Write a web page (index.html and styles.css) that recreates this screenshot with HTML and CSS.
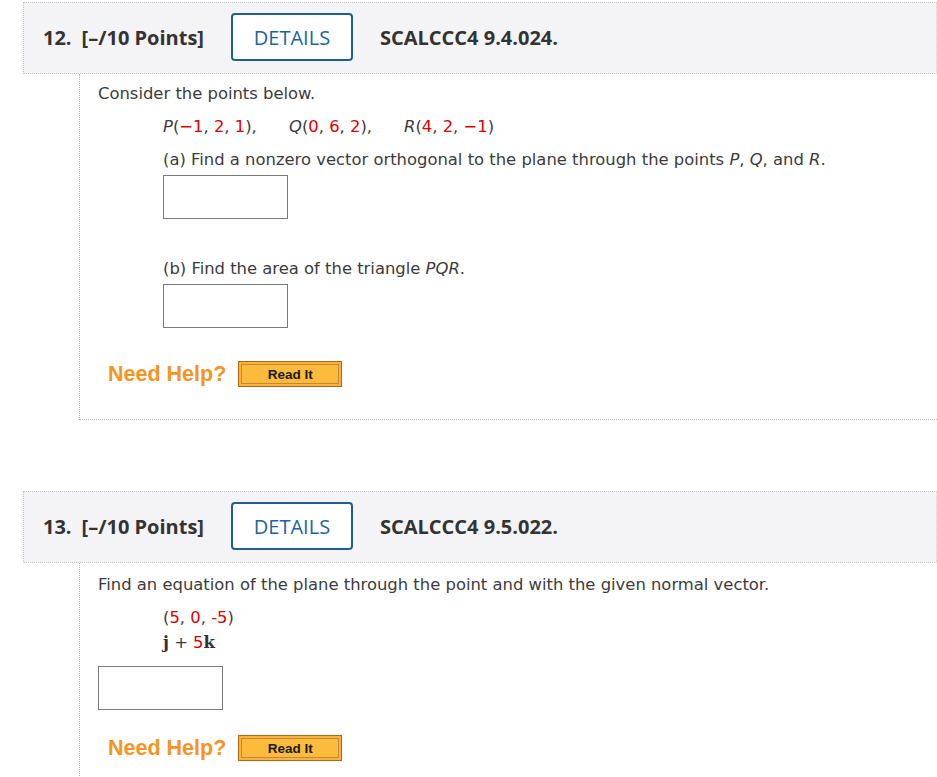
FILE: index.html
```html
<!DOCTYPE html>
<html>
<head>
<meta charset="utf-8">
<link rel="stylesheet" href="styles.css">
</head>
<body>
<div class="page">
  <section class="question">
    <div class="qhead">
      <span class="qnum">12.</span>
      <span class="qpts">[–/10 Points]</span>
      <span class="details">DETAILS</span>
      <span class="qcode">SCALCCC4 9.4.024.</span>
    </div>
    <div class="qbody">
      <p class="line intro">Consider the points below.</p>
      <p class="line indent pts">
        <span class="pt"><i>P</i>(<span class="red">−1</span>, <span class="red">2</span>, <span class="red">1</span>),</span>
        <span class="pt"><i>Q</i>(<span class="red">0</span>, <span class="red">6</span>, <span class="red">2</span>),</span>
        <span class="pt"><i>R</i>(<span class="red">4</span>, <span class="red">2</span>, <span class="red">−1</span>)</span>
      </p>
      <p class="line indent parta">(a) Find a nonzero vector orthogonal to the plane through the points <i>P</i>, <i>Q</i>, and <i>R</i>.</p>
      <div class="answer indent-box"></div>
      <p class="line indent partb">(b) Find the area of the triangle <i>PQR</i>.</p>
      <div class="answer indent-box"></div>
      <div class="help">
        <span class="needhelp">Need Help?</span>
        <span class="readit"><span class="readit-inner">Read It</span></span>
      </div>
    </div>
  </section>

  <section class="question second">
    <div class="qhead">
      <span class="qnum">13.</span>
      <span class="qpts">[–/10 Points]</span>
      <span class="details">DETAILS</span>
      <span class="qcode">SCALCCC4 9.5.022.</span>
    </div>
    <div class="qbody">
      <p class="line intro">Find an equation of the plane through the point and with the given normal vector.</p>
      <p class="line indent vec1">(<span class="red">5</span>, <span class="red">0</span>, <span class="red">-5</span>)</p>
      <p class="line indent vec2"><b class="serif">j</b> + <span class="red">5</span><b class="serif">k</b></p>
      <div class="answer box2"></div>
      <div class="help help2">
        <span class="needhelp">Need Help?</span>
        <span class="readit"><span class="readit-inner">Read It</span></span>
      </div>
    </div>
  </section>
</div>
</body>
</html>
```

FILE: styles.css
```css
html, body {
  margin: 0;
  padding: 0;
  background: #ffffff;
}
.page {
  padding: 2px 0 0 23px;
  width: 914px;
}
.question.second {
  margin-top: 71px;
}
.qhead {
  box-sizing: content-box;
  border: 1px dotted #c8c8c8;
  border-right: 1px dotted #d0d0d0;
  background: #f4f3f5;
  display: flex;
  align-items: center;
  padding: 0 0 2px 19px;
  height: 68px;
  font-family: "Open Sans", "Liberation Sans", sans-serif;
  font-weight: 700;
  font-size: 20px;
  color: #333333;
}
.qnum {
  margin-right: 10px;
}
.qpts {
  margin-right: 27px;
}
.details {
  box-sizing: border-box;
  width: 122px;
  height: 48px;
  border: 2px solid #1d5f8f;
  border-radius: 4px;
  background: #ffffff;
  color: #1b64a0;
  font-weight: 400;
  font-size: 20px;
  display: flex;
  align-items: center;
  justify-content: center;
  margin-right: 27px;
}
.qbody {
  margin-left: 56px;
  border-left: 1px dotted #b4b4b4;
  border-bottom: 1px dotted #b4b4b4;
  padding: 10px 0 0 18px;
  font-family: "DejaVu Sans", Verdana, sans-serif;
  font-size: 16.4px;
  color: #3c3c3c;
  height: 346px;
  box-sizing: border-box;
}
.second .qbody {
  border-bottom: none;
  height: 213px;
  padding-top: 12px;
}
.line {
  margin: 0;
  line-height: 20px;
  white-space: nowrap;
}
.indent {
  margin-left: 65px;
}
.pts {
  margin-top: 13px;
  display: flex;
}
.pt:nth-child(1) { width: 126px; }
.pt:nth-child(2) { width: 115px; }
.parta {
  margin-top: 13px;
}
.red {
  color: #e00000;
}
.answer {
  box-sizing: border-box;
  width: 125px;
  height: 44px;
  border: 1px solid #7a7a7a;
  background: #ffffff;
}
.indent-box {
  margin: 5px 0 0 65px;
}
.partb {
  margin-top: 40px;
}
.help {
  display: flex;
  align-items: center;
  margin: 33px 0 0 10px;
}
.needhelp {
  font-family: "Liberation Sans", Arial, sans-serif;
  font-weight: 700;
  font-size: 21.5px;
  color: #f7941d;
  margin-right: 12px;
}
.readit {
  box-sizing: border-box;
  width: 104px;
  height: 26px;
  border: 1px solid #b0651c;
  background: #fbb13a;
  padding: 2px;
  display: flex;
}
.readit-inner {
  flex: 1;
  border: 1px solid #c4873a;
  background: #fdbb3c;
  font-family: "Liberation Sans", Arial, sans-serif;
  font-weight: 700;
  font-size: 13.5px;
  color: #1a1a1a;
  display: flex;
  align-items: center;
  justify-content: center;
}
.vec1 {
  margin-top: 13px;
}
.vec2 {
  margin-top: 5px;
}
.serif {
  font-family: "DejaVu Serif", "Liberation Serif", serif;
  color: #333;
}
.box2 {
  margin-top: 13px;
}
.help2 {
  margin-top: 25px;
}
```
